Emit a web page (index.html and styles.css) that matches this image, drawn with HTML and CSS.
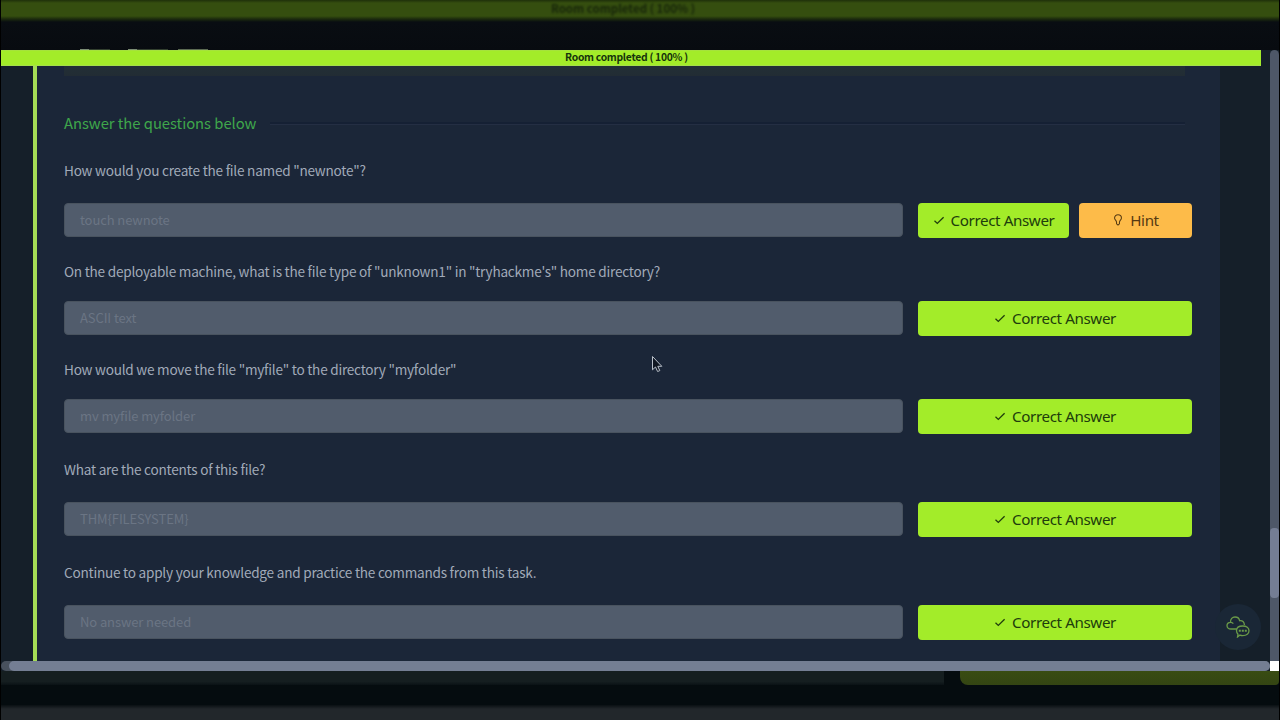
FILE: index.html
```
<!DOCTYPE html>
<html lang="en">
<head>
    <meta charset="UTF-8">
    <meta name="viewport" content="width=device-width, initial-scale=1.0">
    <title>Room completed</title>
    <link rel="stylesheet" href="styles.css">
</head>
<body>

    <!-- Shared icons -->
    <svg class="sprite">
        <symbol id="check" viewBox="0 0 12 12">
            <path d="M1.5 6.8 L4.3 9.4 L10.6 3.2" fill="none" stroke="currentColor" stroke-width="1.3"/>
        </symbol>
    </svg>

    <div class="backdrop-top"><span>Room completed ( 100% )</span></div>

    <div class="window">
        <div class="view">
            <div class="progress">Room completed ( 100% )</div>

            <div class="page">
                <div class="task">
                    <div class="task-edge"></div>
                    <h2><span>Answer the questions below</span></h2>

                    <div class="question wide-gap">
                        <p>How would you create the file named "newnote"?</p>
                        <div class="answer">
                            <div class="field">touch newnote</div>
                            <button class="correct"><svg><use href="#check"/></svg>Correct Answer</button>
                            <button class="hint">
                                <svg viewBox="0 0 12 14"><path d="M4.3 9.5 C4.2 7.5 2 6.8 2 4.6 A4 3.8 0 0 1 10 4.6 C10 6.8 7.8 7.5 7.7 9.5 V11.5 L6 13 L4.3 11.5 Z" fill="none" stroke="currentColor" stroke-width="1.2"/></svg>Hint
                            </button>
                        </div>
                    </div>

                    <div class="question">
                        <p>On the deployable machine, what is the file type of "unknown1" in "tryhackme's" home directory?</p>
                        <div class="answer">
                            <div class="field">ASCII text</div>
                            <button class="correct"><svg><use href="#check"/></svg>Correct Answer</button>
                        </div>
                    </div>

                    <div class="question">
                        <p>How would we move the file "myfile" to the directory "myfolder"</p>
                        <div class="answer">
                            <div class="field">mv myfile myfolder</div>
                            <button class="correct"><svg><use href="#check"/></svg>Correct Answer</button>
                        </div>
                    </div>

                    <div class="question wide-gap">
                        <p>What are the contents of this file?</p>
                        <div class="answer">
                            <div class="field">THM{FILESYSTEM}</div>
                            <button class="correct"><svg><use href="#check"/></svg>Correct Answer</button>
                        </div>
                    </div>

                    <div class="question wide-gap">
                        <p>Continue to apply your knowledge and practice the commands from this task.</p>
                        <div class="answer">
                            <div class="field">No answer needed</div>
                            <button class="correct"><svg><use href="#check"/></svg>Correct Answer</button>
                        </div>
                    </div>
                </div>
            </div>
        </div>

        <div class="scroll-y"><div class="thumb"></div></div>
        <div class="scroll-x"><div class="thumb"></div></div>
        <div class="corner"></div>
    </div>

    <div class="backdrop-bottom">
        <div class="cards">
            <div class="card-dark"></div>
            <div class="card-green"></div>
        </div>
        <div class="footer"></div>
    </div>

    <!-- Floating chat button -->
    <div class="chat">
        <svg viewBox="0 0 24 22" fill="none" stroke="currentColor" stroke-width="1.3">
            <path d="M10.5 13 H5 C2.5 13 1 11.5 1 9.5 C1 7.5 2.5 6.3 4.5 6.3 C4.3 3 6.3 1 9 1 C11.8 1 13.3 2.7 13.6 4.7 C16.5 4.3 18.3 6 18.4 9"/>
            <path d="M4.5 6.3 C6 6.2 6.8 6.8 7.3 7.6"/>
            <path d="M11.5 21 L12 18.2 C10.8 17 10.5 16 10.5 14.8 C10.5 11.9 13 10 16.7 10 C20.5 10 23 12 23 14.8 C23 17.6 20.5 19.6 16.7 19.6 C15.7 19.6 14.7 19.4 14 19.1 Z"/>
            <path d="M12.8 14.8 H20.8" stroke-width="2" stroke-dasharray="2 1"/>
        </svg>
    </div>

    <svg class="cursor" viewBox="0 0 12 18">
        <path d="M1.5 1.5 V14.8 L4.5 12 L6.6 16.5 L8.8 15.6 L6.8 11.3 H10.8 Z" fill="#101722" stroke="#b9c0ca" stroke-width="1"/>
    </svg>

</body>
</html>
```
FILE: styles.css
```
* {
    box-sizing: border-box;
}
body {
    margin: 0;
    width: 1280px;
    height: 720px;
    overflow: hidden;
    position: relative;
    background: #080b10;
    border-left: 1px solid #000;
    border-right: 1px solid #000;
    font-family: "Noto Sans CJK SC", "Noto Sans", sans-serif;
}
.sprite {
    display: none;
}

/* Dimmed page behind the window */
.backdrop-top {
    height: 50px;
    display: flex;
    flex-direction: column;
    justify-content: space-between;
    background: linear-gradient(#1f300a 0, #354e0f 3px, #354e0f 16px, #1c2b0d 19px, #090d12 22px, #080b10 100%);
    text-align: center;
}
.backdrop-top span {
    width: 1244px;
    font-size: 11.5px;
    font-weight: bold;
    line-height: 16px;
    color: #17250a;
    filter: blur(1.3px);
}
/* Tops of the heading cut off by the progress bar */
.backdrop-top::after {
    content: "";
    width: 128px;
    height: 1px;
    margin-left: 79px;
    background: linear-gradient(90deg, #7c8d74 0 9px, #33402f 9px 30px, transparent 30px 48px, #7c8d74 48px 57px, #33402f 57px 88px, transparent 88px 98px, #5c6b52 98px);
}
.backdrop-bottom {
    height: 49px;
    display: flex;
    flex-direction: column;
    justify-content: space-between;
    background: #050c0f;
}
.cards {
    height: 14px;
    display: flex;
    gap: 16px;
}
.card-dark {
    width: 943px;
    background: linear-gradient(#151e20 75%, #0a1215);
}
.card-green {
    flex: 1;
    background: linear-gradient(#394c12, #344513);
    border-radius: 0 0 4px 8px;
}
.footer {
    height: 15px;
    background: linear-gradient(#0a1013, #22272b 4px);
}

/* Window */
.window {
    height: 621px;
    display: grid;
    grid-template-columns: 1269px 9px;
    grid-template-rows: 611px 10px;
    background: #151f29;
}
.progress {
    width: 1260px;
    height: 16px;
    padding-right: 9px;
    background: #a3ec29;
    border-top: 1px solid #a6e23d;
    border-bottom: 1px solid #a5df49;
    color: #16330c;
    font-size: 10.3px;
    font-weight: bold;
    letter-spacing: -0.27px;
    line-height: 12px;
    text-align: center;
}
.page {
    height: 595px;
    padding-left: 32px;
}
.task {
    width: 1187px;
    height: 595px;
    padding: 0 28px 0 27px;
    background: #1b2638;
    border-left: 4px solid #a5dc55;
}
.task-edge {
    width: 1121px;
    height: 10px;
    background: linear-gradient(#222f36, #222c34);
}
h2 {
    margin: 36px 0 0;
    width: 1121px;
    height: 22px;
    display: flex;
    align-items: center;
    gap: 14px;
    font-size: 14.8px;
    font-weight: normal;
    letter-spacing: -0.03px;
    line-height: 22px;
    color: #3fa64b;
    white-space: nowrap;
}
h2::after {
    content: "";
    flex: 1;
    height: 2px;
    margin-top: 1px;
    background: #152034;
    border-bottom: 1px solid #242e43;
}
.question {
    margin-top: 23px;
}
h2 + .question {
    margin-top: 26px;
}
.question p {
    margin: 0 0 20px;
    height: 20px;
    font-size: 13.6px;
    letter-spacing: -0.235px;
    line-height: 20px;
    color: #a1aab9;
    white-space: nowrap;
}
.question.wide-gap p {
    margin-bottom: 23px;
}
.question:nth-child(n+6) {
    margin-top: 25px;
}
.answer {
    display: flex;
    height: 35px;
}
.field {
    width: 839px;
    height: 34px;
    margin-right: 15px;
    padding-left: 15px;
    background: #515c6c;
    border: 1px solid #49535f;
    border-radius: 4px;
    color: #6b7584;
    font-size: 13px;
    letter-spacing: -0.1px;
    line-height: 32px;
}
button {
    display: flex;
    align-items: center;
    justify-content: center;
    gap: 6px;
    height: 35px;
    padding: 0 0 2px;
    border: none;
    border-radius: 4px;
    font-family: "Noto Sans", sans-serif;
    font-size: 15.2px;
    letter-spacing: -0.4px;
}
button svg {
    width: 12px;
    height: 12px;
}
.correct {
    flex: 1;
    background: #a3ec29;
    color: #203d0c;
}
.hint {
    width: 113px;
    margin-left: 10px;
    background: #fdbb49;
    color: #563a12;
}

/* Scrollbars */
.scroll-y {
    background: #4e5768;
    border-radius: 5px 5px 0 0;
    padding-top: 478px;
}
.scroll-y .thumb {
    height: 70px;
    background: #747d94;
    border-radius: 4px;
}
.scroll-x {
    background: #48515d;
    padding-left: 8px;
    border-radius: 5px;
}
.scroll-x .thumb {
    height: 10px;
    background: #747e93;
    border-radius: 5px;
}
.corner {
    background: #fff;
}

/* Items floating over the page */
.chat {
    position: absolute;
    left: 1214px;
    top: 604px;
    width: 46px;
    height: 46px;
    display: flex;
    align-items: center;
    justify-content: center;
    background: #1a2736;
    border-radius: 50%;
    color: #6a9a48;
}
.chat svg {
    width: 24px;
    height: 22px;
}
.cursor {
    position: absolute;
    left: 650px;
    top: 355px;
    width: 12px;
    height: 18px;
}
```
